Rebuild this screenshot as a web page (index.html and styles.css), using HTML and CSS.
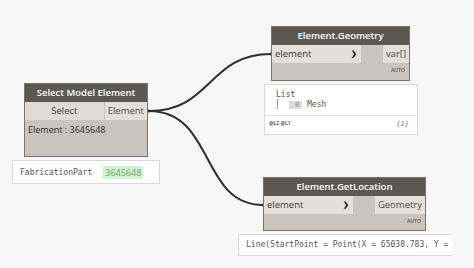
FILE: index.html
```html
<!DOCTYPE html>
<html lang="en">
<head>
    <meta charset="UTF-8">
    <meta name="viewport" content="width=device-width, initial-scale=1.0">
    <title>Dynamo graph</title>
    <link rel="stylesheet" href="styles.css">
</head>
<body>
    <div class="canvas">
        <svg class="wires" width="474" height="268" viewBox="0 0 474 268">
            <path d="M149,111 C212,111 208,54 271,54" />
            <path d="M149,111 C215,111 200,205 263,205" />
            <circle cx="149" cy="111" r="1.6" />
            <circle cx="271" cy="54" r="1.6" />
            <circle cx="263" cy="205" r="1.6" />
        </svg>

        <!-- Select Model Element -->
        <div class="node node-select">
            <div class="node-title">Select Model Element</div>
            <div class="node-row">
                <div class="select-btn">Select</div>
                <div class="port-out">Element</div>
            </div>
            <div class="node-info">Element : 3645648</div>
        </div>
        <div class="preview preview-fab">
            <span>FabricationPart</span>
            <span class="hl">3645648</span>
        </div>

        <!-- Element.Geometry -->
        <div class="node node-geom">
            <div class="node-title">Element.Geometry</div>
            <div class="node-row">
                <div class="port-in">element <span class="chev">&#x276F;</span></div>
                <div class="port-out">var[]</div>
            </div>
            <div class="node-auto">AUTO</div>
        </div>
        <div class="preview preview-list">
            <div class="list-body">
                <div>List</div>
                <div class="list-item"><span class="idx">0</span> Mesh</div>
                <span class="list-arrow"></span>
            </div>
            <div class="list-foot">
                <span class="levels">@L2 @L1</span>
                <span class="count">{1}</span>
            </div>
        </div>

        <!-- Element.GetLocation -->
        <div class="node node-loc">
            <div class="node-title">Element.GetLocation</div>
            <div class="node-row">
                <div class="port-in">element <span class="chev">&#x276F;</span></div>
                <div class="port-out">Geometry</div>
            </div>
            <div class="node-auto">AUTO</div>
        </div>
        <div class="preview preview-line">Line(StartPoint = Point(X = 65038.783, Y = 3</div>
    </div>
</body>
</html>
```

FILE: styles.css
```css
body {
    margin: 0;
    background-color: #f7f7f7;
    font-family: "Open Sans", "Liberation Sans", sans-serif;
}
.canvas {
    position: relative;
    width: 474px;
    height: 268px;
    overflow: hidden;
}
.wires {
    position: absolute;
    left: 0;
    top: 0;
}
.wires path {
    fill: none;
    stroke: #2e2e2e;
    stroke-width: 2;
}
.wires circle {
    fill: #2e2e2e;
}

.node {
    position: absolute;
    box-sizing: border-box;
    background: #c9c5be;
    border: 1px solid #77736d;
    display: flex;
    flex-direction: column;
}
.node-title {
    height: 18px;
    background: #5b5854;
    color: #fff;
    font-weight: 600;
    font-size: 9.5px;
    line-height: 18px;
    text-align: center;
}
.node-row {
    display: flex;
    justify-content: space-between;
    gap: 1px;
    height: 18px;
    font-size: 9.5px;
    line-height: 18px;
    color: #3c3a37;
}
.select-btn {
    width: 79px;
    background: #dedbd6;
    text-align: center;
}
.port-out {
    background: #e3e0db;
    padding: 0 3px;
    color: #4a4845;
}
.port-in {
    background: #e3e0db;
    padding: 0 4px 0 3px;
    display: flex;
    justify-content: space-between;
}
.chev {
    font-size: 7px;
    font-weight: bold;
    color: #222;
}
.node-info {
    padding: 3px 3px;
    font-size: 9px;
    color: #2c2a28;
}
.node-auto {
    text-align: right;
    font-size: 5px;
    font-weight: bold;
    color: #6f6b66;
    padding: 4px 4px 0;
}

.node-select {
    left: 24px;
    top: 83px;
    width: 124px;
    height: 74px;
}
.node-select .port-out {
    flex: 1;
    text-align: right;
}
.node-geom {
    left: 271px;
    top: 26px;
    width: 139px;
    height: 55px;
}
.node-geom .port-in {
    width: 82px;
}
.node-loc {
    left: 263px;
    top: 177px;
    width: 163px;
    height: 54px;
}
.node-loc .port-in {
    width: 82px;
}

.preview {
    position: absolute;
    box-sizing: border-box;
    background: #fff;
    border: 1px solid #d9d9d9;
    font-family: "DejaVu Sans Mono", "Liberation Mono", monospace;
    font-size: 8px;
    color: #555;
}
.preview-fab {
    left: 12px;
    top: 160px;
    width: 148px;
    height: 24px;
    display: flex;
    align-items: center;
    gap: 11px;
    padding-left: 7px;
}
.hl {
    background: #d3f2d3;
    color: #6aa86a;
    font-family: "Open Sans", "Liberation Sans", sans-serif;
    font-size: 9px;
    padding: 0 2px;
}
.preview-list {
    left: 264px;
    top: 84px;
    width: 154px;
    height: 51px;
}
.list-body {
    position: relative;
    height: 31px;
    border-bottom: 1px solid #e2e2e2;
    padding: 5px 0 0 11px;
    box-sizing: border-box;
    line-height: 10px;
}
.list-item {
    padding-left: 13px;
}
.idx {
    background: #dcdcdc;
    color: #888;
    padding: 0 3px 0 6px;
    font-size: 7px;
}
.list-arrow {
    position: absolute;
    left: 12px;
    top: 14px;
    width: 1px;
    height: 10px;
    background: #999;
}
.list-foot {
    display: flex;
    justify-content: space-between;
    padding: 4px 8px 0 4px;
}
.levels {
    font-family: "Open Sans", "Liberation Sans", sans-serif;
    font-size: 5px;
    font-weight: bold;
    color: #666;
}
.count {
    font-style: italic;
    font-size: 7px;
    color: #777;
}
.preview-line {
    left: 238px;
    top: 234px;
    width: 214px;
    height: 22px;
    border-right: none;
    line-height: 20px;
    padding-left: 7px;
    white-space: nowrap;
    overflow: hidden;
}
```
